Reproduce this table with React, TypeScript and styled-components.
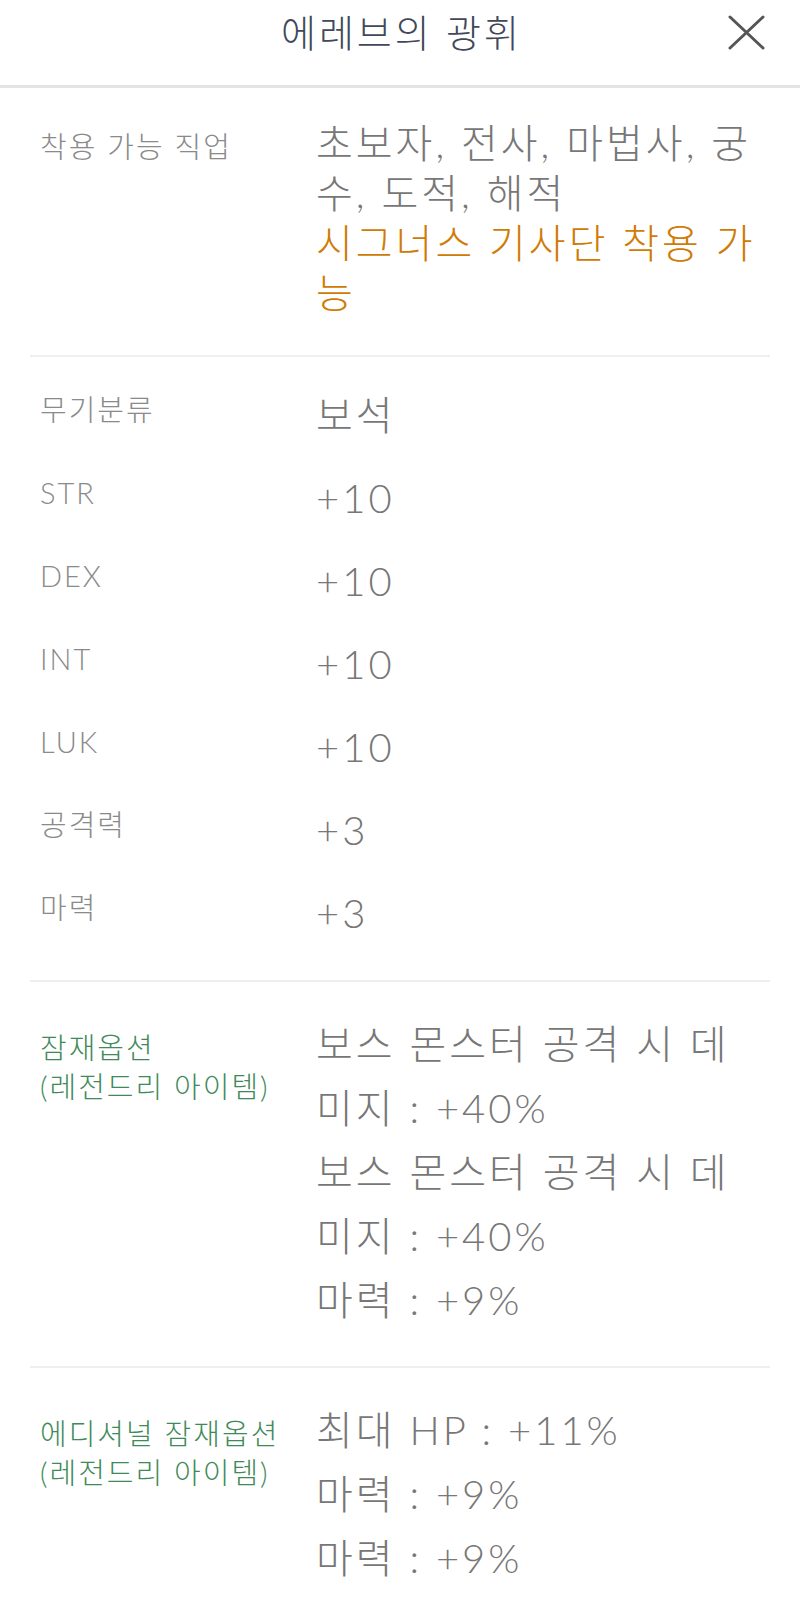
import React from "react";
import styled, { createGlobalStyle } from "styled-components";

const GlobalStyle = createGlobalStyle`
  html, body {
    margin: 0;
    padding: 0;
    background: #ffffff;
  }
  body {
    font-family: "Lato", "Noto Sans CJK KR", sans-serif;
  }
  * {
    box-sizing: border-box;
  }
`;

const Page = styled.div`
  width: 800px;
  min-height: 1611px;
  background: #ffffff;
`;

const Header = styled.header`
  height: 88px;
  display: grid;
  grid-template-columns: 1fr auto 1fr;
  align-items: start;
  border-bottom: 3px solid #e4e4e4;
`;

const Title = styled.h1`
  grid-column: 2;
  margin: 0 0 0 3px;
  font-size: 38px;
  line-height: 64px;
  font-weight: 300;
  letter-spacing: 3px;
  color: #414959;
  white-space: nowrap;
`;

const CloseButton = styled.button`
  grid-column: 3;
  justify-self: end;
  margin: 15px 35px 0 0;
  padding: 0;
  border: 0;
  background: none;
  width: 37px;
  height: 35px;
  display: flex;
  cursor: pointer;
`;

const Body = styled.main`
  padding: 0 30px;
`;

const Section = styled.section<{ $pt: number; $pb: number; $gap?: number; $last?: boolean }>`
  display: flex;
  flex-direction: column;
  gap: ${(p) => p.$gap ?? 0}px;
  padding: ${(p) => p.$pt}px 0 ${(p) => p.$pb}px;
  border-bottom: ${(p) => (p.$last ? "none" : "2px solid #efefef")};
`;

const Row = styled.div<{ $align: "start" | "baseline" }>`
  display: grid;
  grid-template-columns: 276px 1fr;
  padding: 0 11px 0 10px;
  align-items: ${(p) => p.$align};
`;

const Label = styled.div<{ $tone: "gray" | "green" }>`
  font-size: 29px;
  line-height: 39px;
  font-weight: 300;
  letter-spacing: 2px;
  color: ${(p) => (p.$tone === "green" ? "#3f8a59" : "#8a8a8a")};
`;

const LabelLine = styled.span`
  display: block;
`;

const Value = styled.div<{ $lh: number }>`
  font-size: 40px;
  line-height: ${(p) => p.$lh}px;
  font-weight: 300;
  letter-spacing: 3px;
  color: #777777;
`;

const ValueLine = styled.div<{ $accent?: boolean }>`
  color: ${(p) => (p.$accent ? "#cf7b06" : "inherit")};
`;

const stats: [string, string][] = [
  ["무기분류", "보석"],
  ["STR", "+10"],
  ["DEX", "+10"],
  ["INT", "+10"],
  ["LUK", "+10"],
  ["공격력", "+3"],
  ["마력", "+3"],
];

export default function App() {
  return (
    <Page>
      <GlobalStyle />
      <Header>
        <Title>에레브의 광휘</Title>
        <CloseButton aria-label="닫기">
          <svg width="37" height="35" viewBox="0 0 37 35">
            <path
              d="M2 2 L35 33 M35 2 L2 33"
              stroke="#555555"
              strokeWidth="3"
              strokeLinecap="round"
              fill="none"
            />
          </svg>
        </CloseButton>
      </Header>
      <Body>
        <Section $pt={30} $pb={37}>
          <Row $align="baseline">
            <Label $tone="gray">착용 가능 직업</Label>
            <Value $lh={50}>
              <ValueLine>초보자, 전사, 마법사, 궁수, 도적, 해적</ValueLine>
              <ValueLine $accent>시그너스 기사단 착용 가능</ValueLine>
            </Value>
          </Row>
        </Section>

        <Section $pt={33} $pb={42} $gap={33}>
          {stats.map(([k, v]) => (
            <Row key={k} $align="start">
              <Label $tone="gray">{k}</Label>
              <Value $lh={50}>{v}</Value>
            </Row>
          ))}
        </Section>

        <Section $pt={30} $pb={34}>
          <Row $align="baseline">
            <Label $tone="green">
              <LabelLine>잠재옵션</LabelLine>
              <LabelLine>(레전드리 아이템)</LabelLine>
            </Label>
            <Value $lh={64}>
              <ValueLine>보스 몬스터 공격 시 데미지 : +40%</ValueLine>
              <ValueLine>보스 몬스터 공격 시 데미지 : +40%</ValueLine>
              <ValueLine>마력 : +9%</ValueLine>
            </Value>
          </Row>
        </Section>

        <Section $pt={30} $pb={33} $last>
          <Row $align="baseline">
            <Label $tone="green">
              <LabelLine>에디셔널 잠재옵션</LabelLine>
              <LabelLine>(레전드리 아이템)</LabelLine>
            </Label>
            <Value $lh={64}>
              <ValueLine>최대 HP : +11%</ValueLine>
              <ValueLine>마력 : +9%</ValueLine>
              <ValueLine>마력 : +9%</ValueLine>
            </Value>
          </Row>
        </Section>
      </Body>
    </Page>
  );
}
